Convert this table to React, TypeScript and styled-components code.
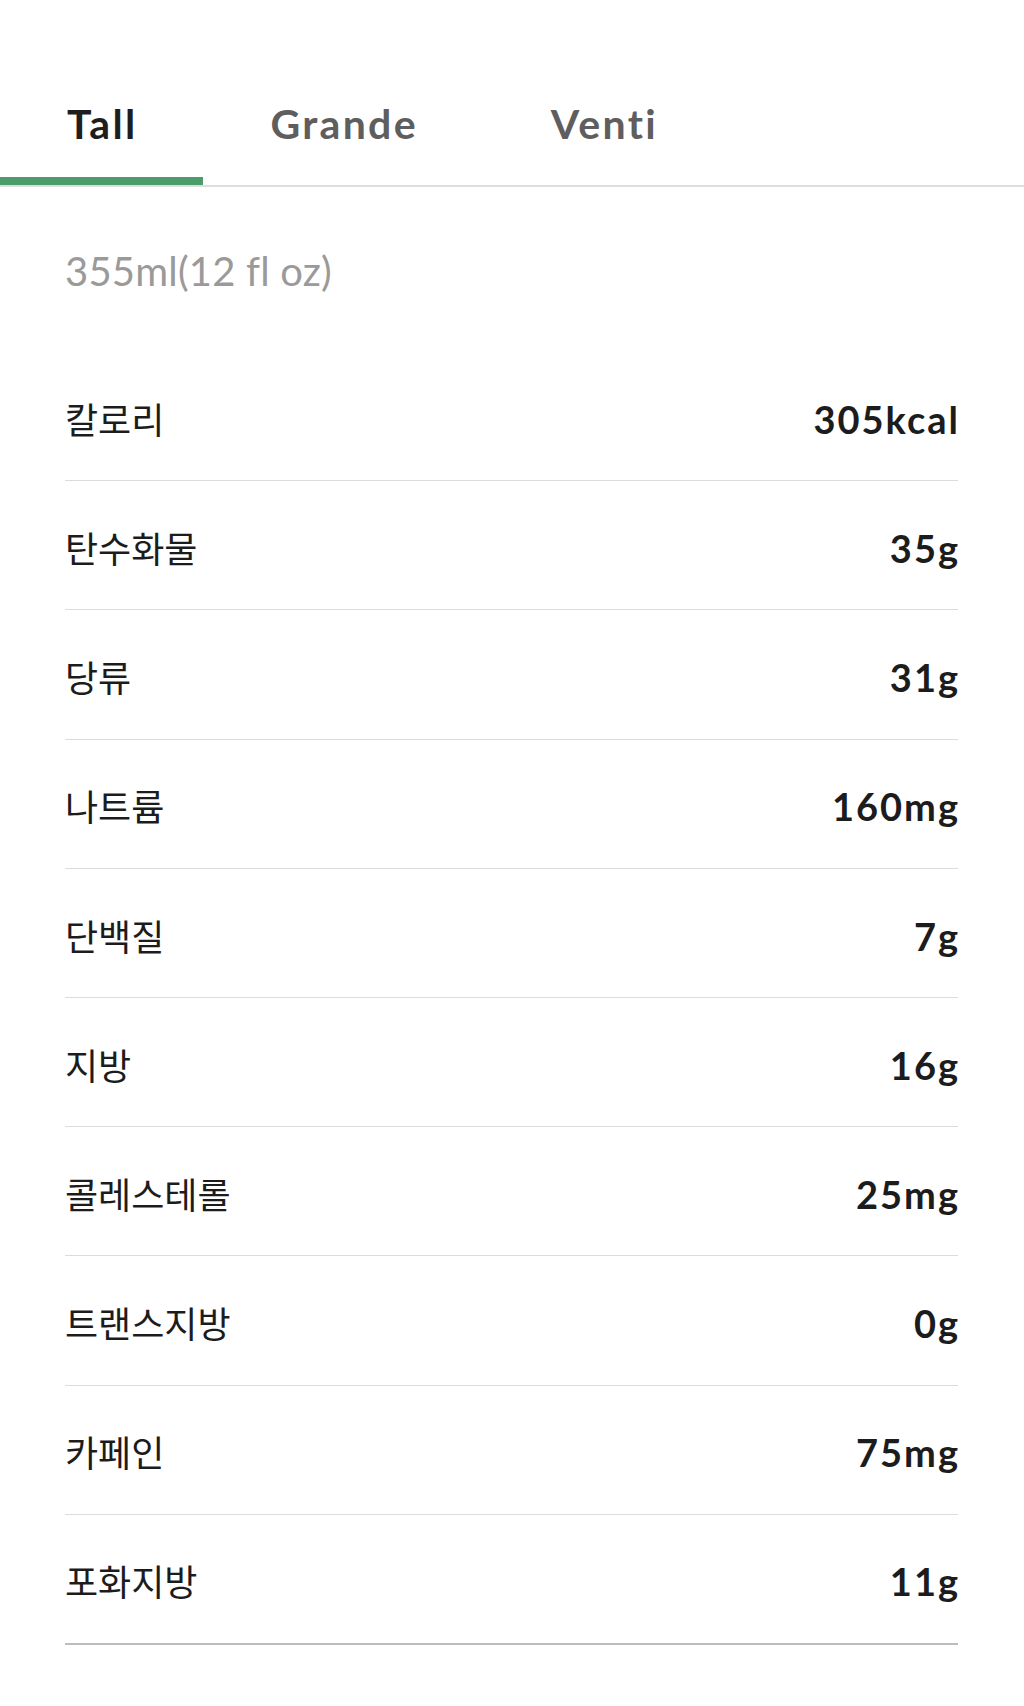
import React, { useState } from "react";
import styled, { createGlobalStyle } from "styled-components";

const GlobalStyle = createGlobalStyle`
  html, body {
    margin: 0;
    padding: 0;
    background: #ffffff;
  }
  body {
    font-family: Lato, "Noto Sans CJK KR", sans-serif;
    -webkit-font-smoothing: antialiased;
  }
`;

const Page = styled.div`
  width: 1024px;
  background: #ffffff;
  padding-bottom: 60px;
`;

const TabBar = styled.div`
  display: flex;
  border-bottom: 2px solid #dedede;
`;

const Tab = styled.button<{ $active: boolean }>`
  appearance: none;
  background: none;
  border: none;
  margin: 0;
  cursor: pointer;
  padding: 99px 66px 28px 67px;
  border-bottom: 8px solid ${(p) => (p.$active ? "#4b9c6b" : "transparent")};
  font-family: Lato, sans-serif;
  font-weight: 700;
  font-size: 41px;
  line-height: 50px;
  color: ${(p) => (p.$active ? "#1e1e1e" : "#5e5e5e")};
  letter-spacing: 2.3px;
`;

const Content = styled.div`
  padding: 0 66px 0 65px;
`;

const SizeText = styled.div`
  margin-top: 61px;
  margin-bottom: 57px;
  font-family: Lato, sans-serif;
  font-size: 40px;
  line-height: 47px;
  letter-spacing: 0.2px;
  color: #9a9a9a;
`;

const List = styled.ul`
  list-style: none;
  margin: 0;
  padding: 0;
`;

const Row = styled.li<{ $last: boolean }>`
  box-sizing: border-box;
  display: flex;
  justify-content: space-between;
  align-items: baseline;
  height: ${(p) => (p.$last ? "130.2px" : "129.2px")};
  padding-top: 45.8px;
  border-bottom: ${(p) => (p.$last ? "2px solid #bdbdbd" : "1px solid #dcdcdc")};
`;

const Label = styled.span`
  font-family: "Noto Sans CJK KR", sans-serif;
  font-size: 36px;
  line-height: 40px;
  color: #1c1c1c;
`;

const Value = styled.span`
  font-family: Lato, sans-serif;
  font-weight: 700;
  font-size: 38px;
  line-height: 40px;
  color: #1c1c1c;
  letter-spacing: 2px;
  margin-right: -2px;
`;

const sizes = ["Tall", "Grande", "Venti"];

const rows: [string, string][] = [
  ["칼로리", "305kcal"],
  ["탄수화물", "35g"],
  ["당류", "31g"],
  ["나트륨", "160mg"],
  ["단백질", "7g"],
  ["지방", "16g"],
  ["콜레스테롤", "25mg"],
  ["트랜스지방", "0g"],
  ["카페인", "75mg"],
  ["포화지방", "11g"],
];

export default function App() {
  const [active, setActive] = useState(0);
  return (
    <Page>
      <GlobalStyle />
      <TabBar>
        {sizes.map((s, i) => (
          <Tab key={s} $active={i === active} onClick={() => setActive(i)}>
            {s}
          </Tab>
        ))}
      </TabBar>
      <Content>
        <SizeText>355ml(12 fl oz)</SizeText>
        <List>
          {rows.map(([k, v], i) => (
            <Row key={k} $last={i === rows.length - 1}>
              <Label>{k}</Label>
              <Value>{v}</Value>
            </Row>
          ))}
        </List>
      </Content>
    </Page>
  );
}
